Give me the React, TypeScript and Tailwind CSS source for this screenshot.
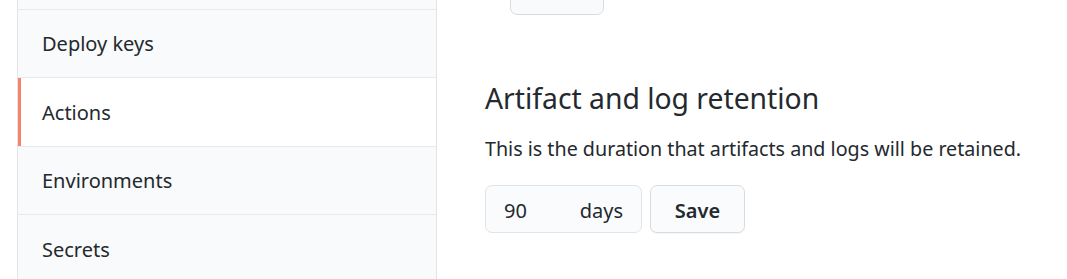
export default function App() {
  const font = { fontFamily: '"Noto Sans", "Open Sans", sans-serif' };
  return (
    <div className="h-[279px] w-[1067px] overflow-hidden bg-white text-[#24292e]" style={font}>
      <div className="flex pl-[17px]">
        {/* sidebar */}
        <div className="w-[420px] shrink-0 border-x border-[#e1e4e8] bg-[#f9fafb]">
          <div className="h-[10px] border-b border-[#e7e9ec]" />
          <div className="flex h-[68px] items-center border-b border-[#e7e9ec] pl-[24px] text-[20px]">
            Deploy keys
          </div>
          <div className="flex h-[69px] items-center border-b border-[#e7e9ec] bg-white pl-[24px] pt-[2px] text-[20px] shadow-[inset_3px_0_0_#f9826c]">
            Actions
          </div>
          <div className="flex h-[68px] items-center border-b border-[#e7e9ec] pl-[24px] text-[20px]">
            Environments
          </div>
          <div className="flex h-[68px] items-center pl-[24px] pt-[2px] text-[20px]">Secrets</div>
        </div>

        {/* main */}
        <div className="ml-[48px] flex-1">
          <div className="ml-[25px] mt-[-34px] h-[49px] w-[94px] rounded-[7px] border border-[#d9dcdf] bg-[#f9fafb]" />
          <h2 className="mt-[63px] text-[28.3px] leading-[40px] font-normal">Artifact and log retention</h2>
          <p className="mt-[17px] text-[19.7px] leading-[28px]">
            This is the duration that artifacts and logs will be retained.
          </p>
          <div className="mt-[22px] flex gap-[8px]">
            <div className="flex h-[48px] w-[157px] items-center justify-between rounded-[7px] border border-[#e1e4e8] bg-[#fafbfc] px-[18px] pt-[4px] text-[20px]">
              <span>90</span>
              <span>days</span>
            </div>
            <button className="h-[48px] w-[95px] rounded-[7px] border border-[#d9dcdf] bg-[#fafbfc] pt-[4px] text-[20px] font-semibold shadow-[0_1px_0_rgba(27,31,35,0.04)]">
              Save
            </button>
          </div>
        </div>
      </div>
    </div>
  );
}
